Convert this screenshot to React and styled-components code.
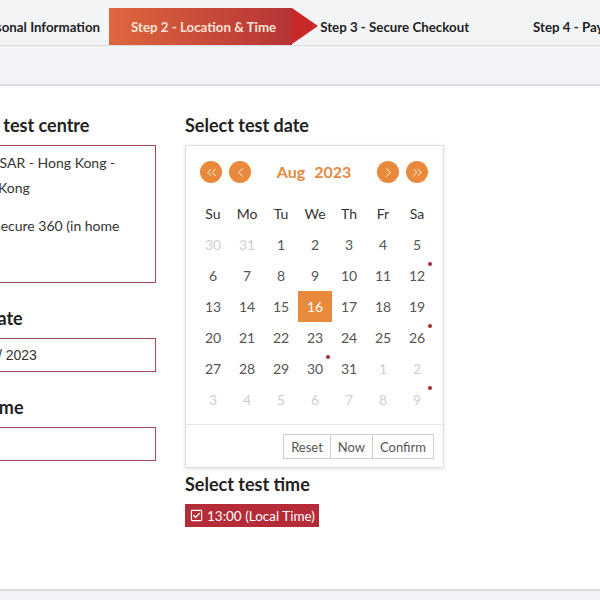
import React from 'react';
import styled, { createGlobalStyle } from 'styled-components';
import { ChevronLeft, ChevronRight, ChevronsLeft, ChevronsRight } from 'lucide-react';
import { FaRegCheckSquare } from 'react-icons/fa';

const GlobalStyle = createGlobalStyle`
  html, body {
    margin: 0;
    padding: 0;
    background: #f2f4f8;
    overflow: hidden;
  }
  body {
    font-family: Lato, "Open Sans", sans-serif;
    color: #222;
  }
`;

const steps = [
  { label: 'Step 1 - Personal Information', pad: '0 9px 0 22px' },
  { label: 'Step 2 - Location & Time', pad: '0 16px 0 22px', active: true },
  { label: 'Step 3 - Secure Checkout', pad: '0 64px 0 2px' },
  { label: 'Step 4 - Payment', pad: '0 22px 0 0' },
];

const weeks = [
  [30, 31, 1, 2, 3, 4, 5],
  [6, 7, 8, 9, 10, 11, 12],
  [13, 14, 15, 16, 17, 18, 19],
  [20, 21, 22, 23, 24, 25, 26],
  [27, 28, 29, 30, 31, 1, 2],
  [3, 4, 5, 6, 7, 8, 9],
];

const dotted = ['1-6', '3-6', '4-3', '5-6'];

function App() {
  return (
    <>
      <GlobalStyle />
      <StepsBar>
        {steps.map((s) => (
          <Step key={s.label} $active={s.active} $pad={s.pad}>
            {s.label}
          </Step>
        ))}
      </StepsBar>
      <Band />
      <Content>
        <Columns>
          <Column>
            <Heading>Select test centre</Heading>
            <CentreBox>
              <p>1. HK SAR - Hong Kong - Hong Kong</p>
              <p>Test: Secure 360 (in home exam)</p>
            </CentreBox>
            <Heading $top={24}>Test date</Heading>
            <Field>16/08 / 2023</Field>
            <Heading $top={24}>Test time</Heading>
            <Field />
          </Column>
          <Column>
            <Heading>Select test date</Heading>
            <Calendar>
              <CalHeader>
                <NavGroup>
                  <NavButton><ChevronsLeft size={15} strokeWidth={1.5} /></NavButton>
                  <NavButton><ChevronLeft size={15} strokeWidth={1.5} /></NavButton>
                </NavGroup>
                <Title>
                  <span>Aug</span>
                  <span>2023</span>
                </Title>
                <NavGroup>
                  <NavButton><ChevronRight size={15} strokeWidth={1.5} /></NavButton>
                  <NavButton><ChevronsRight size={15} strokeWidth={1.5} /></NavButton>
                </NavGroup>
              </CalHeader>
              <Grid>
                {['Su', 'Mo', 'Tu', 'We', 'Th', 'Fr', 'Sa'].map((d) => (
                  <DayName key={d}>{d}</DayName>
                ))}
                {weeks.map((week, r) =>
                  week.map((day, c) => {
                    const muted = (r === 0 && day > 20) || (r >= 4 && day < 15);
                    return (
                      <Day
                        key={`${r}-${c}`}
                        $muted={muted}
                        $selected={r === 2 && day === 16}
                      >
                        {day}
                        {dotted.includes(`${r}-${c}`) && <Dot />}
                      </Day>
                    );
                  })
                )}
              </Grid>
              <CalFooter>
                <ButtonGroup>
                  <FooterButton>Reset</FooterButton>
                  <FooterButton>Now</FooterButton>
                  <FooterButton>Confirm</FooterButton>
                </ButtonGroup>
              </CalFooter>
            </Calendar>
            <Heading $top={5}>Select test time</Heading>
            <TimeBadge>
              <FaRegCheckSquare size={13} />
              13:00 (Local Time)
            </TimeBadge>
          </Column>
        </Columns>
      </Content>
    </>
  );
}

export default App;

const StepsBar = styled.div`
  display: flex;
  align-items: flex-end;
  height: 45px;
  margin-left: -95px;
  background: #f3f4f6;
  border-bottom: 1px solid #dcdde0;
  white-space: nowrap;
`;

const Step = styled.div`
  position: relative;
  display: flex;
  align-items: center;
  height: 37px;
  padding: ${(p) => p.$pad};
  margin-right: ${(p) => (p.$active ? '26px' : '0')};
  font-size: 13.3px;
  font-weight: 700;
  color: ${(p) => (p.$active ? '#fde4d6' : '#1e1e1e')};
  background: ${(p) =>
    p.$active ? 'linear-gradient(90deg, #df673e 0%, #c84a3a 55%, #b53335 100%)' : 'transparent'};

  &::after {
    content: '';
    display: ${(p) => (p.$active ? 'block' : 'none')};
    position: absolute;
    left: 100%;
    top: 0;
    border-top: 18.5px solid transparent;
    border-bottom: 18.5px solid transparent;
    border-left: 26px solid #c82a2a;
  }
`;

const Band = styled.div`
  height: 38px;
  background: #f2f4f8;
  border-bottom: 2px solid #dcdde0;
`;

const Content = styled.div`
  background: #fff;
  height: 505px;
  border-bottom: 2px solid #dcdde0;
  padding-top: 28px;
  box-sizing: border-box;
`;

const Columns = styled.div`
  display: grid;
  grid-template-columns: 206px 259px;
  column-gap: 29px;
  margin-left: -50px;
`;

const Column = styled.div`
  display: flex;
  flex-direction: column;
  align-items: flex-start;
`;

const Heading = styled.h2`
  margin: ${(p) => p.$top || 0}px 0 9px 0;
  font-size: 18px;
  line-height: 22px;
  font-weight: 700;
  color: #222;
`;

const CentreBox = styled.div`
  align-self: stretch;
  height: 138px;
  box-sizing: border-box;
  border: 1px solid #a8474f;
  padding: 4px 10px;
  font-size: 14px;
  line-height: 25px;
  color: #333;

  p {
    margin: 0 0 13px;
  }
`;

const Field = styled.div`
  align-self: stretch;
  height: 34px;
  box-sizing: border-box;
  border: 1px solid #a8474f;
  padding: 0 8px;
  display: flex;
  align-items: center;
  font-family: "Liberation Sans", Arial, sans-serif;
  font-size: 14px;
  color: #333;
`;

const Calendar = styled.div`
  align-self: stretch;
  border: 1px solid #e0e0e0;
  background: #fff;
  box-shadow: 0 1px 4px rgba(0, 0, 0, 0.12);
  padding: 15px 10px 0;
`;

const CalHeader = styled.div`
  display: flex;
  align-items: center;
  justify-content: space-between;
  padding: 0 5px 0 4px;
  margin-bottom: 15px;
`;

const NavGroup = styled.div`
  display: flex;
  gap: 7px;
`;

const NavButton = styled.span`
  width: 22px;
  height: 22px;
  border-radius: 50%;
  background: #e8893c;
  color: #fff;
  display: flex;
  align-items: center;
  justify-content: center;
`;

const Title = styled.div`
  display: flex;
  gap: 9px;
  font-size: 16px;
  line-height: 20px;
  font-weight: 700;
  color: #e48a40;
`;

const Grid = styled.div`
  display: grid;
  grid-template-columns: repeat(7, 34px);
  grid-auto-rows: 31px;
`;

const DayName = styled.div`
  display: flex;
  align-items: center;
  justify-content: center;
  font-size: 14px;
  color: #333;
`;

const Day = styled.div`
  position: relative;
  display: flex;
  align-items: center;
  justify-content: center;
  font-size: 14px;
  color: ${(p) => (p.$selected ? '#fff' : p.$muted ? '#cfcfcf' : '#555')};
  background: ${(p) => (p.$selected ? '#e8893c' : 'transparent')};
`;

const Dot = styled.span`
  position: absolute;
  top: 2px;
  right: 2px;
  width: 4px;
  height: 4px;
  border-radius: 50%;
  background: #a82a35;
`;

const CalFooter = styled.div`
  margin-top: 9px;
  border-top: 1px solid #e6e6e6;
  margin-left: -10px;
  margin-right: -10px;
  padding: 9px 9px 8px;
  display: flex;
  justify-content: flex-end;
`;

const ButtonGroup = styled.div`
  display: flex;
`;

const FooterButton = styled.button`
  height: 25px;
  padding: 0 7px;
  border: 1px solid #cfcfcf;
  margin-left: -1px;
  background: #fff;
  font-family: Lato, sans-serif;
  font-size: 13px;
  color: #555;
`;

const TimeBadge = styled.div`
  height: 23px;
  display: flex;
  align-items: center;
  gap: 4px;
  padding: 0 4px 0 5px;
  background: #b52b38;
  color: #fff;
  font-size: 13.5px;
`;
